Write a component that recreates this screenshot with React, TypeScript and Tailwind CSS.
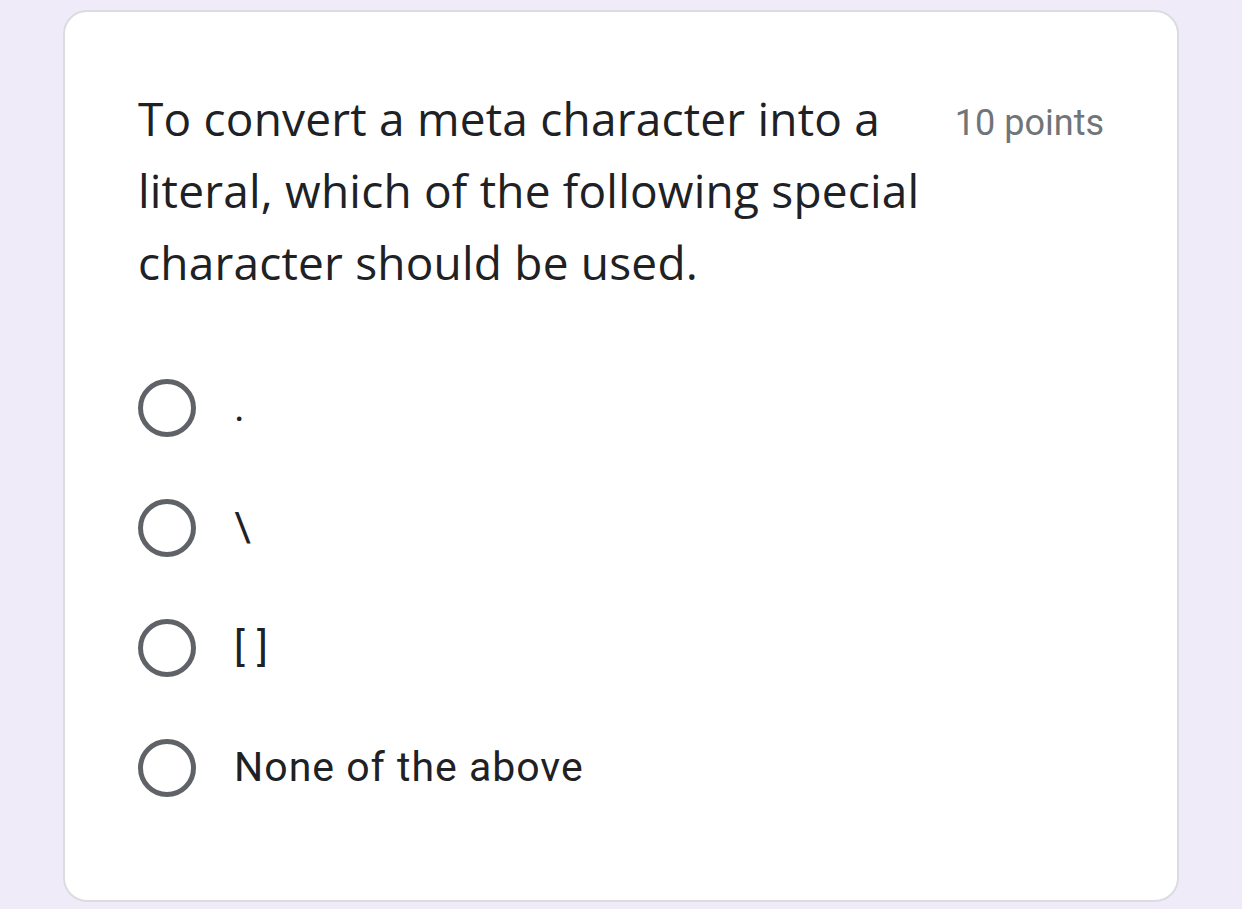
export default function App() {
  const options = ['.', '\\', '[ ]', 'None of the above'];

  return (
    <div className="min-h-screen bg-[#f0ebf8] px-[63px] pt-[10px]">
      <div className="rounded-[24px] border-2 border-[#dadce0] bg-white px-[73px] pt-[70px] pb-[72px]">
        {/* Question header */}
        <div className="flex items-start justify-between">
          <div
            className="w-[800px] text-[46px] leading-[72px] tracking-[0.2px] text-[#202124]"
            style={{ fontFamily: '"Open Sans", sans-serif' }}
          >
            To convert a meta character into a literal, which of the following special character should be used.
          </div>
          <div
            className="pt-[5px] text-[36px] leading-[72px] text-[#70757a]"
            style={{ fontFamily: 'Roboto, sans-serif' }}
          >
            10 points
          </div>
        </div>

        {/* Options */}
        <div className="mt-[50px] flex flex-col">
          {options.map((opt) => (
            <div key={opt} className="flex h-[120px] items-center">
              <div className="h-[58px] w-[58px] rounded-full border-[5px] border-[#5f6368]" />
              <span
                className="ml-[38px] text-[41px] tracking-[1px] text-[#202124]"
                style={{ fontFamily: 'Roboto, sans-serif' }}
              >
                {opt}
              </span>
            </div>
          ))}
        </div>
      </div>
    </div>
  );
}
